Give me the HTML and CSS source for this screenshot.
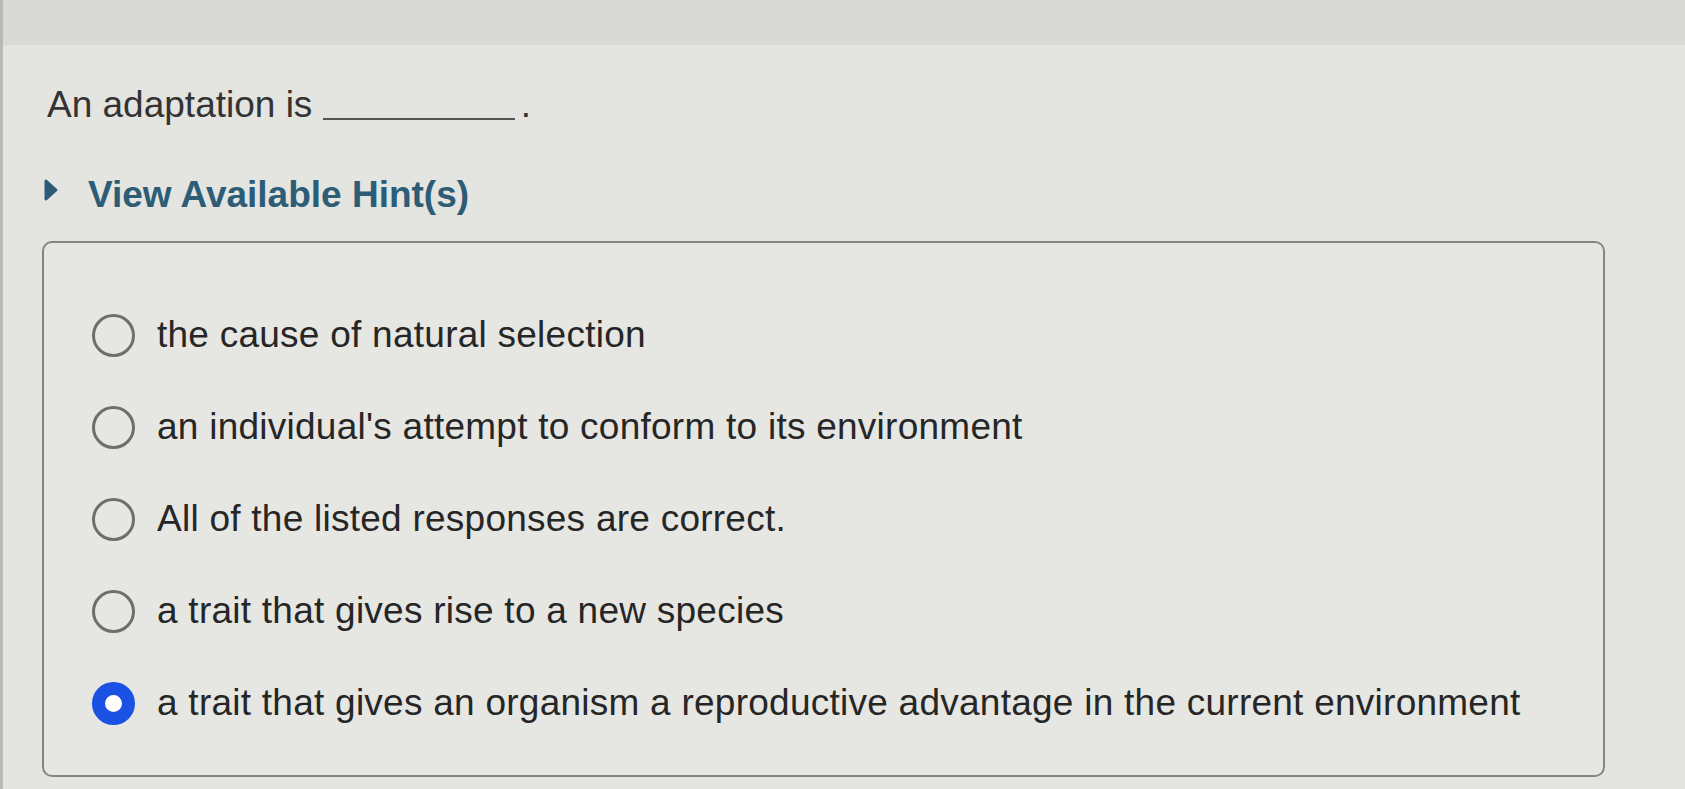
FILE: index.html
```html
<!DOCTYPE html>
<html lang="en">
<head>
  <meta charset="UTF-8">
  <title>Question</title>
  <link rel="stylesheet" href="styles.css">
</head>
<body>

<div class="topbar"></div>

<div class="question">
  <p class="prompt">An adaptation is <span class="blank"></span>.</p>

  <button class="hint-toggle" type="button">
    <svg class="caret" width="16" height="24" viewBox="0 0 16 24">
      <polygon points="3,3 13,12 3,21" fill="#2d5d76" stroke="#2d5d76" stroke-width="3" stroke-linejoin="round"/>
    </svg>
    View Available Hint(s)
  </button>

  <div class="choices">
    <label class="choice">
      <input type="radio" name="answer">
      <span>the cause of natural selection</span>
    </label>
    <label class="choice">
      <input type="radio" name="answer">
      <span>an individual's attempt to conform to its environment</span>
    </label>
    <label class="choice">
      <input type="radio" name="answer">
      <span>All of the listed responses are correct.</span>
    </label>
    <label class="choice">
      <input type="radio" name="answer">
      <span>a trait that gives rise to a new species</span>
    </label>
    <label class="choice">
      <input type="radio" name="answer" checked>
      <span>a trait that gives an organism a reproductive advantage in the current environment</span>
    </label>
  </div>
</div>

</body>
</html>
```

FILE: styles.css
```css
* {
  box-sizing: border-box;
  margin: 0;
  padding: 0;
}
body {
  background: #e4e4e1;
  font-family: "Liberation Sans", Arial, Helvetica, sans-serif;
  color: #2b2b2b;
  border-left: 3px solid #b9b9b7;
  min-height: 100vh;
}
.topbar {
  height: 45px;
  background: #d9d9d7;
}
.question {
  padding: 39px 80px 0 39px;
}
.prompt {
  font-size: 37px;
  line-height: 42px;
  margin-left: 5px;
  color: #333;
}
.blank {
  display: inline-block;
  width: 192px;
  border-bottom: 2px solid #555;
  margin-bottom: -3px;
  margin-right: 6px;
}
.hint-toggle {
  display: flex;
  align-items: center;
  gap: 29px;
  margin-top: 48px;
  margin-left: 1px;
  background: none;
  border: none;
  font-family: inherit;
  font-size: 37px;
  font-weight: bold;
  line-height: 42px;
  color: #2d5d76;
  cursor: pointer;
}
.caret {
  margin-top: -10px;
}
.choices {
  margin-top: 25px;
  border: 2px solid #858585;
  border-radius: 10px;
  background: #e6e6e3;
  padding: 46px 20px 26px 48px;
}
.choice {
  display: flex;
  align-items: center;
  gap: 22px;
  height: 92px;
  font-size: 37px;
  letter-spacing: 0.25px;
  color: #262626;
  cursor: pointer;
}
.choice input {
  appearance: none;
  -webkit-appearance: none;
  width: 43px;
  height: 43px;
  border-radius: 50%;
  border: 3px solid #6e6e6e;
  background: transparent;
  flex-shrink: 0;
  margin: 0;
}
.choice input:checked {
  border: 13px solid #1b52e4;
  background: #fff;
}
```
